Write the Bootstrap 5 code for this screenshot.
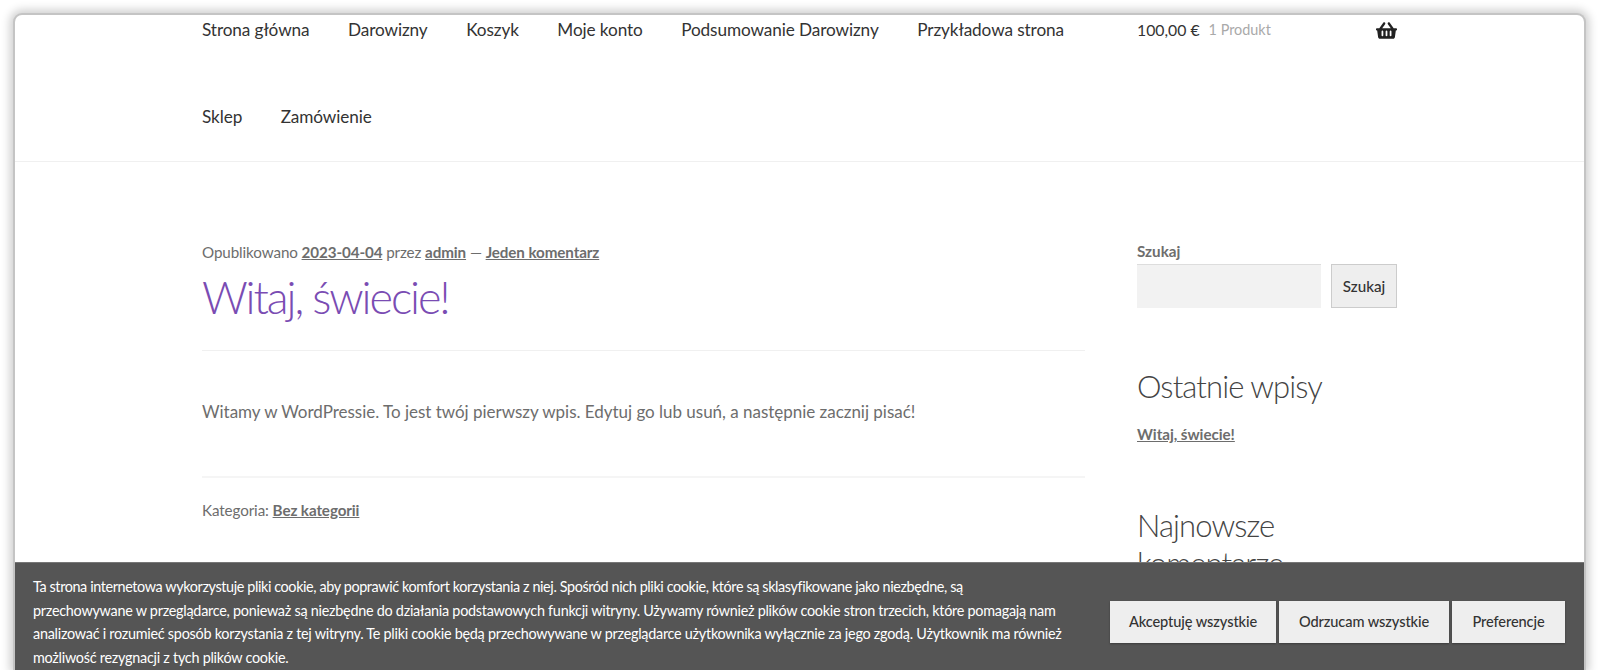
<!DOCTYPE html>
<html lang="pl">
<head>
<meta charset="utf-8">
<title>Witaj, świecie!</title>
<link href="https://cdn.jsdelivr.net/npm/bootstrap@5.3.0/dist/css/bootstrap.min.css" rel="stylesheet">
<style>
html,body{height:670px;overflow:hidden;background:#fff}
body{font-family:"Lato","Noto Sans",sans-serif;color:#6d6d6d;font-size:16px;padding:13px 13px 0}
.win{height:657px;width:1573px;border:solid #c4c4c4;border-width:2px 2px 0 2px;border-radius:9px 9px 0 0;box-shadow:0 0 10px 3px rgba(0,0,0,.2);overflow:hidden;background:#fff}
.hdr{height:147px;border-bottom:1px solid #f0f0f0;padding-left:187px}
.shell{width:1195px}
.menu-col{width:883px;height:146px;column-gap:38.5px}
.menu-item{height:87px;line-height:30px;color:#333;font-size:17.2px;letter-spacing:-.1px;text-decoration:none}
.cart-col{width:260px;height:30px;line-height:30px;margin-left:52px;color:#333;font-size:15.8px}
.cart-count{color:#a9a9a9;font-size:14.4px;margin-left:9px}
.basket{width:21px;height:19px;fill:#222}
.body-wrap{padding:77px 0 0 187px}
.art{width:883px}
.meta{height:26px;line-height:26px;font-size:15.2px;letter-spacing:-.1px}
.meta a,.cat a,.recent a{color:#6d6d6d;font-weight:700;text-decoration:underline}
.ttl{font-size:45px;font-weight:300;color:#7a4cb3;line-height:58px;margin:3px 0 0;letter-spacing:-2.1px;padding-bottom:24px;border-bottom:1px solid #f0f0f0}
.txt{font-size:17px;line-height:30px;height:127px;padding-top:46px;margin:0;border-bottom:2px solid #f5f5f5;letter-spacing:-.02px}
.cat{font-size:15.2px;line-height:26px;margin-top:19px;letter-spacing:-.1px}
.side{width:260px;margin-left:52px}
.lbl{font-weight:700;font-size:15.2px;line-height:26px;height:26px;color:#6d6d6d;margin-top:-1px}
.srow{margin-top:0;gap:10px}
.sinp{width:184px;height:44px;background:#f2f2f2;border:0;border-top:1px solid #ddd;border-radius:0;padding:0}
.sbtn{width:66px;height:44px;background:#eee;border:1px solid #ccc;border-radius:0;color:#333;font-weight:500;font-size:15.2px;padding:0}
.wh{font-weight:300;font-size:31px;line-height:38px;color:#444;margin:0;letter-spacing:-.9px}
.wh-a{margin-top:59px}
.wh-b{margin-top:59px;width:200px}
.recent{font-size:15.2px;line-height:26px;margin-top:16px;letter-spacing:-.05px}
.cookie{left:0;right:0;bottom:0;height:108px;background:#555;color:#fff;padding:12px 19px 0 18px;border-top:1px solid #777}
.cookie-txt{width:1048px;font-size:14.4px;line-height:23.5px;letter-spacing:-.26px;margin:0;white-space:nowrap}
.line-tight{letter-spacing:-.39px}
.cbtns{margin-left:auto;gap:3px;margin-top:26px}
.cb{height:42px;background:#eee;color:#333;border:0;border-radius:0;font-size:14.6px;font-weight:500;letter-spacing:-.1px;padding:0;box-shadow:0 1px 2px rgba(0,0,0,.3)}
.cb1{width:166px}.cb2{width:170px}.cb3{width:113px}
</style>
</head>
<body>
<div class="win position-relative">
  <header class="hdr">
    <div class="shell d-flex">
      <nav class="menu-col d-flex flex-wrap align-content-start">
        <a class="menu-item" href="#">Strona główna</a>
        <a class="menu-item" href="#">Darowizny</a>
        <a class="menu-item" href="#">Koszyk</a>
        <a class="menu-item" href="#">Moje konto</a>
        <a class="menu-item" href="#">Podsumowanie Darowizny</a>
        <a class="menu-item" href="#">Przykładowa strona</a>
        <a class="menu-item" href="#">Sklep</a>
        <a class="menu-item" href="#">Zamówienie</a>
      </nav>
      <div class="cart-col d-flex align-items-center">
        <span>100,00 €</span><span class="cart-count">1 Produkt</span>
        <svg class="basket ms-auto" viewBox="0 0 576 512" aria-hidden="true"><path d="M576 216v16c0 13.255-10.745 24-24 24h-8l-26.113 182.788C514.509 462.435 494.257 480 470.37 480H105.63c-23.887 0-44.139-17.565-47.518-41.212L32 256h-8c-13.255 0-24-10.745-24-24v-16c0-13.255 10.745-24 24-24h67.341l106.78-146.821c10.395-14.292 30.407-17.453 44.701-7.058 14.293 10.395 17.453 30.408 7.058 44.701L170.477 192h235.046L326.12 82.821c-10.395-14.292-7.234-34.306 7.059-44.701 14.291-10.395 34.306-7.235 44.701 7.058L484.659 192H552c13.255 0 24 10.745 24 24zM312 392V280c0-13.255-10.745-24-24-24s-24 10.745-24 24v112c0 13.255 10.745 24 24 24s24-10.745 24-24zm112 0V280c0-13.255-10.745-24-24-24s-24 10.745-24 24v112c0 13.255 10.745 24 24 24s24-10.745 24-24zm-224 0V280c0-13.255-10.745-24-24-24s-24 10.745-24 24v112c0 13.255 10.745 24 24 24s24-10.745 24-24z"/></svg>
      </div>
    </div>
  </header>
  <div class="body-wrap d-flex">
    <main class="art">
      <div class="meta">Opublikowano <a href="#">2023-04-04</a> przez <a href="#">admin</a> — <a href="#">Jeden komentarz</a></div>
      <h1 class="ttl">Witaj, świecie!</h1>
      <p class="txt">Witamy w WordPressie. To jest twój pierwszy wpis. Edytuj go lub usuń, a następnie zacznij pisać!</p>
      <div class="cat">Kategoria: <a href="#">Bez kategorii</a></div>
    </main>
    <aside class="side">
      <div class="lbl">Szukaj</div>
      <div class="srow d-flex">
        <input class="sinp" type="text" aria-label="Szukaj">
        <button class="sbtn" type="button">Szukaj</button>
      </div>
      <h2 class="wh wh-a">Ostatnie wpisy</h2>
      <div class="recent"><a href="#">Witaj, świecie!</a></div>
      <h2 class="wh wh-b">Najnowsze komentarze</h2>
    </aside>
  </div>
  <div class="cookie position-absolute d-flex">
    <p class="cookie-txt"><span class="line-tight">Ta strona internetowa wykorzystuje pliki cookie, aby poprawić komfort korzystania z niej. Spośród nich pliki cookie, które są sklasyfikowane jako niezbędne, są</span><br>przechowywane w przeglądarce, ponieważ są niezbędne do działania podstawowych funkcji witryny. Używamy również plików cookie stron trzecich, które pomagają nam<br>analizować i rozumieć sposób korzystania z tej witryny. Te pliki cookie będą przechowywane w przeglądarce użytkownika wyłącznie za jego zgodą. Użytkownik ma również<br>możliwość rezygnacji z tych plików cookie.</p>
    <div class="cbtns d-flex align-items-start">
      <button class="cb cb1" type="button">Akceptuję wszystkie</button>
      <button class="cb cb2" type="button">Odrzucam wszystkie</button>
      <button class="cb cb3" type="button">Preferencje</button>
    </div>
  </div>
</div>
<script src="https://cdn.jsdelivr.net/npm/bootstrap@5.3.0/dist/js/bootstrap.bundle.min.js"></script>
</body>
</html>
